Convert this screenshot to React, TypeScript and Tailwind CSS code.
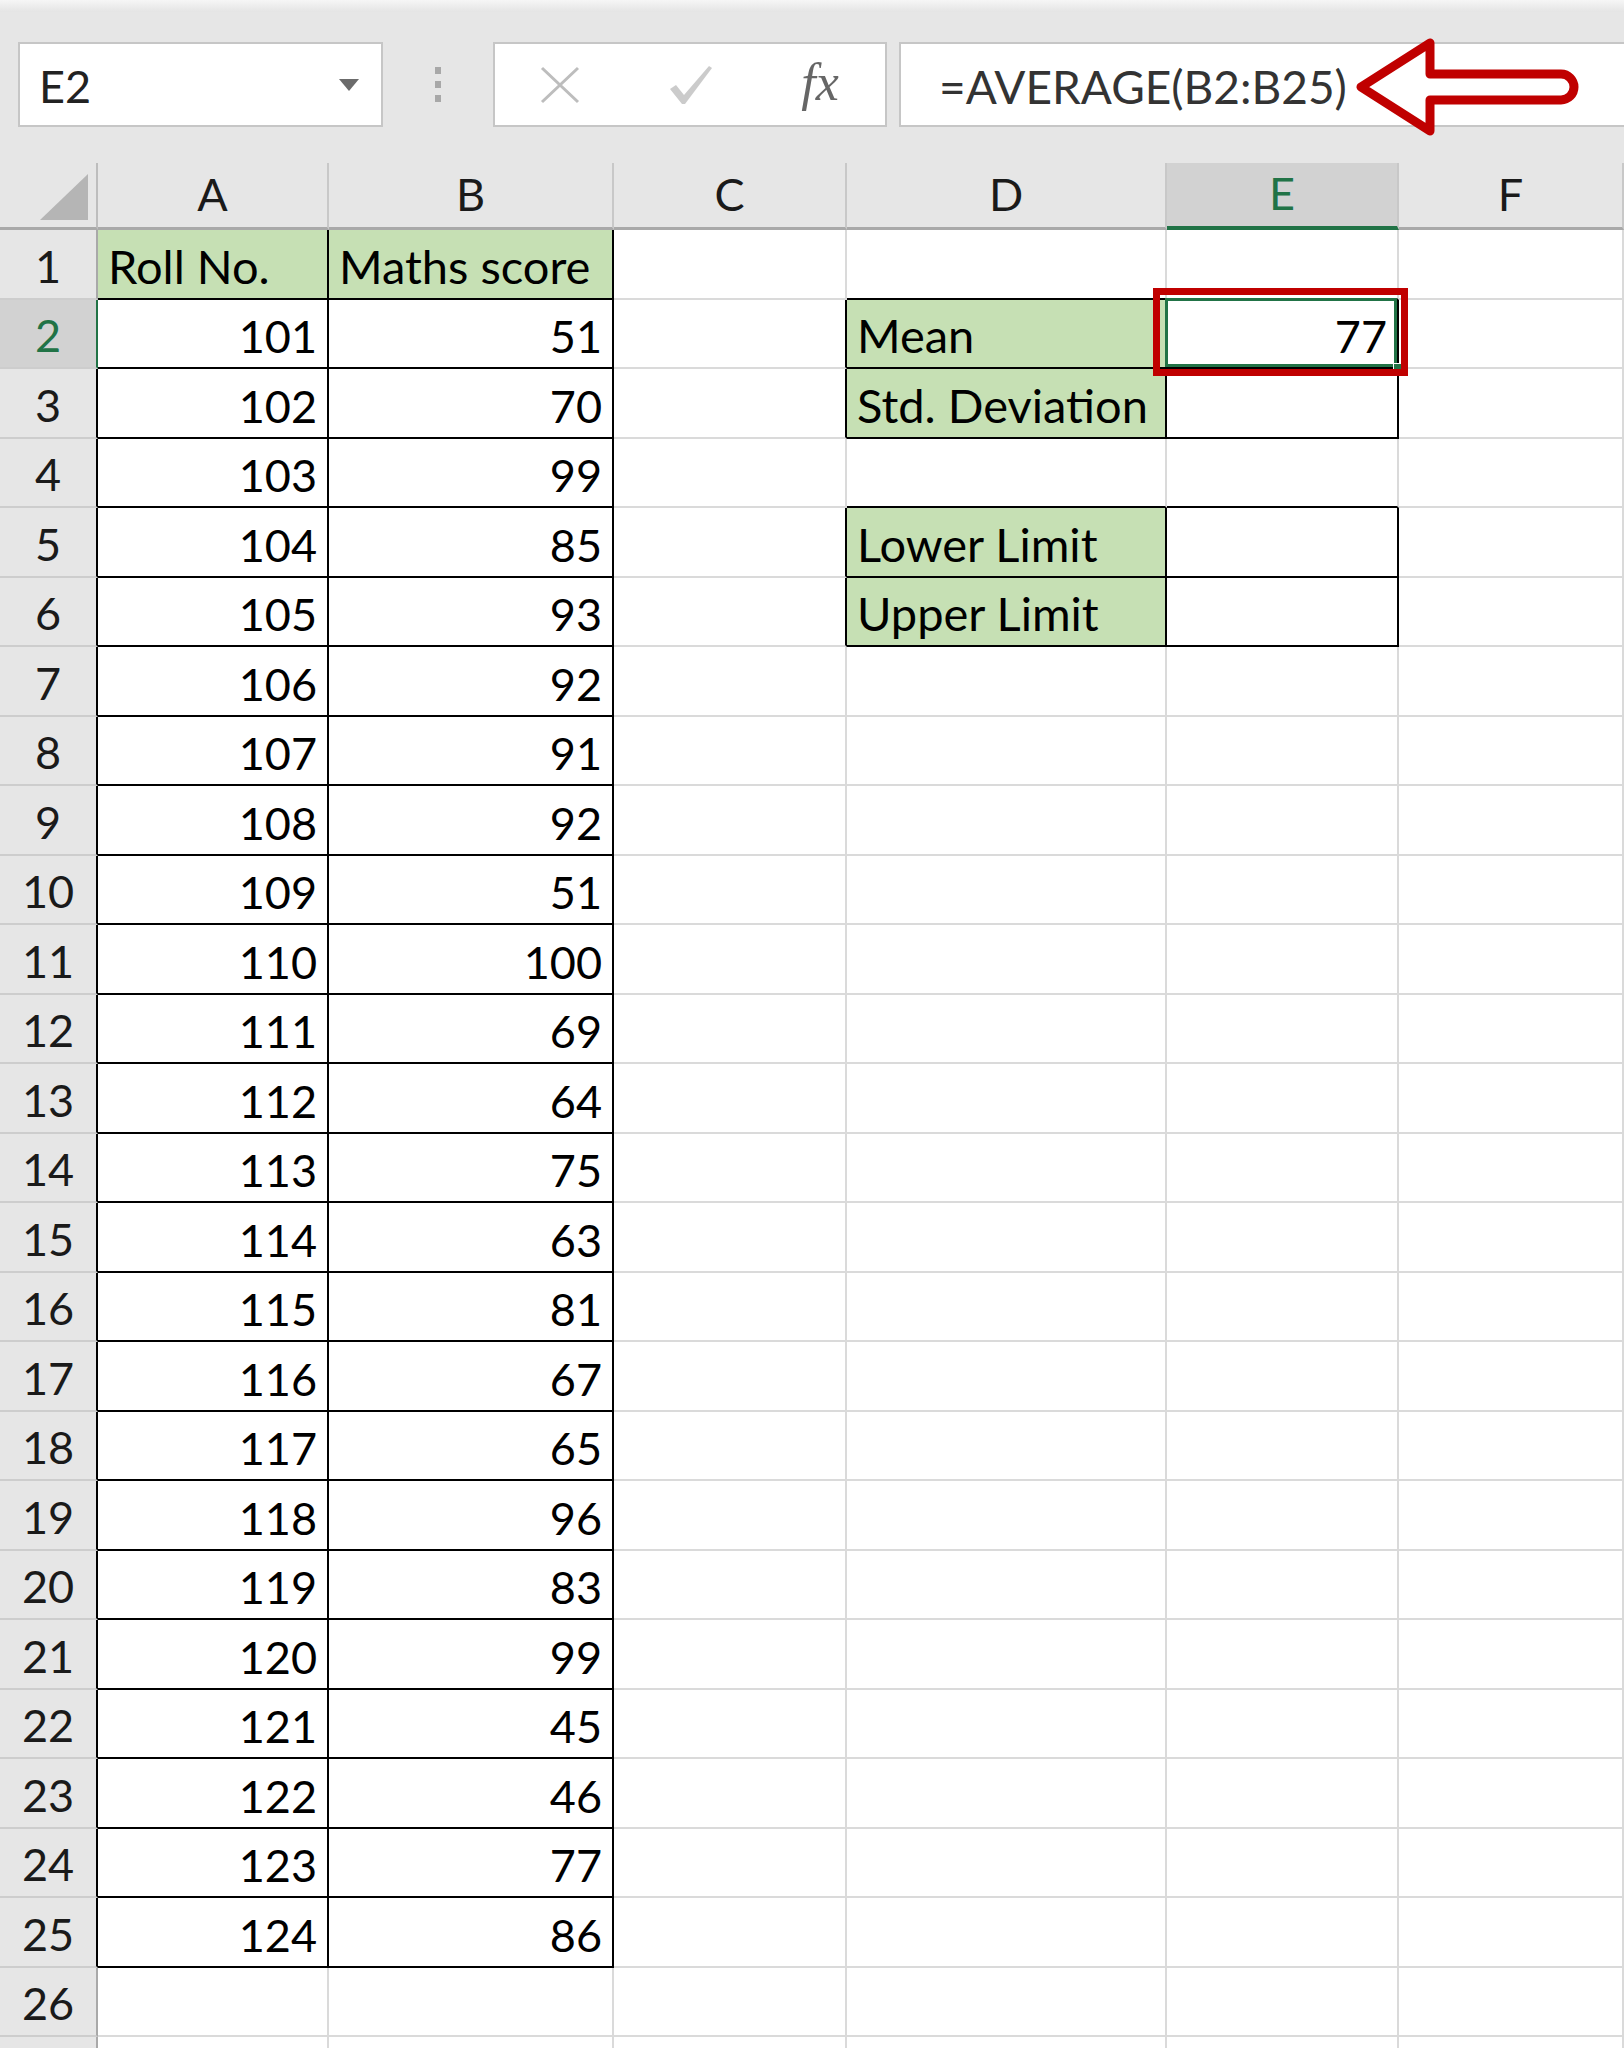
import React from 'react'

// ── Dados ───────────────────────────────────────────────────────────
const scores = [51, 70, 99, 85, 93, 92, 91, 92, 51, 100, 69, 64, 75, 63, 81, 67, 65, 96, 83, 99, 45, 46, 77, 86]

const cols = [
  { key: 'A', w: 'w-[231px] flex-none' },
  { key: 'B', w: 'w-[285px] flex-none' },
  { key: 'C', w: 'w-[233px] flex-none' },
  { key: 'D', w: 'w-[320px] flex-none' },
  { key: 'E', w: 'w-[232px] flex-none' },
  { key: 'F', w: 'flex-1' },
]

const labels: Record<number, string> = { 2: 'Mean', 3: 'Std. Deviation', 5: 'Lower Limit', 6: 'Upper Limit' }

function boxed(r: number, c: number) {
  if (c <= 1 && r >= 1 && r <= 25) return true
  if ((c === 3 || c === 4) && [2, 3, 5, 6].includes(r)) return true
  return false
}

function cellText(r: number, c: number): { text: string; right: boolean } | null {
  if (r === 1 && c === 0) return { text: 'Roll No.', right: false }
  if (r === 1 && c === 1) return { text: 'Maths score', right: false }
  if (r >= 2 && r <= 25 && c === 0) return { text: String(99 + r), right: true }
  if (r >= 2 && r <= 25 && c === 1) return { text: String(scores[r - 2]), right: true }
  if (c === 3 && labels[r]) return { text: labels[r], right: false }
  if (r === 2 && c === 4) return { text: '77', right: true }
  return null
}

// ── Barra de fórmulas ───────────────────────────────────────────────
function Toolbar() {
  return (
    <div className="relative h-[163px] flex-none bg-[#e6e6e6]">
      <div className="h-[12px] bg-gradient-to-b from-[#f6f6f6] to-[#e4e4e4]" />
      <div className="flex items-center pl-[18px] pt-[30px]">
        {/* Caixa de nome */}
        <div className="w-[365px] h-[85px] flex-none flex items-center justify-between bg-white border-2 border-[#c6c6c6] pl-[19px] pr-[22px]">
          <span className="text-[45px] leading-none text-[#222] pt-[4px]">E2</span>
          <svg width="20" height="12" viewBox="0 0 20 12">
            <path d="M0 0 L20 0 L10 12 Z" fill="#6b6b6b" />
          </svg>
        </div>

        {/* Pontos */}
        <div className="w-[110px] flex-none flex flex-col items-center gap-[7px]">
          <span className="w-[6px] h-[7px] bg-[#a8a8a8]" />
          <span className="w-[6px] h-[7px] bg-[#a8a8a8]" />
          <span className="w-[6px] h-[7px] bg-[#a8a8a8]" />
        </div>

        {/* Botões X ✓ fx */}
        <div className="w-[394px] h-[85px] flex-none flex items-center bg-white border-2 border-[#c6c6c6]">
          <div className="w-[130px] flex justify-center">
            <svg width="44" height="40" viewBox="0 0 44 40">
              <path d="M4 3 L40 37 M40 3 L4 37" stroke="#bdbdbd" strokeWidth="3" fill="none" />
            </svg>
          </div>
          <div className="w-[130px] flex justify-center">
            <svg width="50" height="44" viewBox="0 0 50 44">
              <path d="M5 26 L11 22 L19 32 L44 3 L47 5 L20 41 L17 41 Z" fill="#cbcbcb" />
            </svg>
          </div>
          <div className="w-[130px] flex justify-center">
            <span className="font-['Liberation_Serif',serif] italic text-[52px] leading-none text-[#666] -mt-[4px]">fx</span>
          </div>
        </div>

        {/* Caixa da fórmula */}
        <div className="ml-[12px] flex-1 h-[85px] flex items-center bg-white border-2 border-r-0 border-[#c6c6c6] pl-[38px]">
          <span className="text-[46px] leading-none text-[#333] pt-[4px]">=AVERAGE(B2:B25)</span>
        </div>
      </div>

      {/* Seta vermelha */}
      <svg className="absolute left-[1340px] top-[30px]" width="260" height="120" viewBox="0 0 260 120">
        <path
          d="M21 57 L90 13 L90 44 L221 44 A13 13 0 0 1 221 70 L90 70 L90 101 Z"
          fill="none"
          stroke="#c00000"
          strokeWidth="9"
          strokeLinejoin="round"
        />
      </svg>
    </div>
  )
}

// ── Cabeçalho das colunas ───────────────────────────────────────────
function ColumnHeader() {
  return (
    <div className="flex h-[67px] flex-none bg-[#e6e6e6]">
      <div className="w-[98px] flex-none relative border-r-2 border-r-[#bdbdbd] border-b-[3px] border-b-[#a9a9a9]">
        <svg className="absolute left-[40px] top-[11px]" width="48" height="46" viewBox="0 0 48 46">
          <path d="M48 0 L48 46 L0 46 Z" fill="#b5b5b5" />
        </svg>
      </div>
      {cols.map((col) => {
        const sel = col.key === 'E'
        return (
          <div
            key={col.key}
            className={`${col.w} flex items-end justify-center pb-[10px] text-[45px] leading-none border-r-2 border-r-[#c8c8c8] ${
              sel
                ? 'bg-[#d2d2d2] text-[#217346] border-b-[4px] border-b-[#217346]'
                : 'text-[#1a1a1a] border-b-[3px] border-b-[#a9a9a9]'
            }`}
          >
            {col.key}
          </div>
        )
      })}
    </div>
  )
}

// ── Linha da planilha ───────────────────────────────────────────────
function SheetRow({ r }: { r: number }) {
  const h = r % 2 === 1 ? 'h-[70px]' : 'h-[69px]'
  const headerRight =
    r === 2
      ? 'border-r-[#217346] bg-[#d2d2d2] text-[#217346]'
      : r >= 3 && r <= 25
        ? 'border-r-black bg-[#e6e6e6] text-[#1a1a1a]'
        : 'border-r-[#a9a9a9] bg-[#e6e6e6] text-[#1a1a1a]'

  return (
    <div className={`flex ${h} flex-none`}>
      <div className={`w-[98px] flex-none flex items-end justify-center pb-[9px] text-[45px] leading-none border-r-2 border-b-2 border-b-[#cdcdcd] ${headerRight}`}>
        {r <= 26 ? r : ''}
      </div>
      {cols.map((col, c) => {
        const t = cellText(r, c)
        const rightBlack = boxed(r, c) || boxed(r, c + 1)
        const bottomBlack = boxed(r, c) || boxed(r + 1, c)
        const green = (r === 1 && c <= 1) || (c === 3 && boxed(r, c))
        const isE2 = r === 2 && c === 4
        return (
          <div
            key={col.key}
            className={`${col.w} relative flex items-end border-r-2 border-b-2 pb-[8px] leading-none text-black ${
              rightBlack ? 'border-r-black' : 'border-r-[#dadada]'
            } ${bottomBlack ? 'border-b-black' : 'border-b-[#dadada]'} ${green ? 'bg-[#c6e0b4]' : 'bg-white'} ${
              t && t.right ? 'justify-end pr-[10px] text-[45px]' : 'justify-start pl-[10px] text-[47px]'
            } ${isE2 ? 'z-10' : ''}`}
          >
            {t && <span className="whitespace-nowrap">{t.text}</span>}
            {isE2 && (
              <>
                <div className="absolute -left-[2px] -top-[2px] right-0 bottom-0 border-[3px] border-[#217346]" />
                <div className="absolute -right-[5px] -bottom-[5px] w-[9px] h-[9px] bg-[#217346] border border-white" />
                <div className="absolute -left-[14px] -top-[12px] -right-[11px] -bottom-[9px] border-[7px] border-[#c00000]" />
              </>
            )}
          </div>
        )
      })}
    </div>
  )
}

export default function App() {
  const rows = Array.from({ length: 27 }, (_, i) => i + 1)
  return (
    <div className="w-[1624px] h-[2048px] overflow-hidden flex flex-col bg-white font-['Lato','Open_Sans',sans-serif]">
      <Toolbar />
      <ColumnHeader />
      {rows.map((r) => (
        <SheetRow key={r} r={r} />
      ))}
    </div>
  )
}
